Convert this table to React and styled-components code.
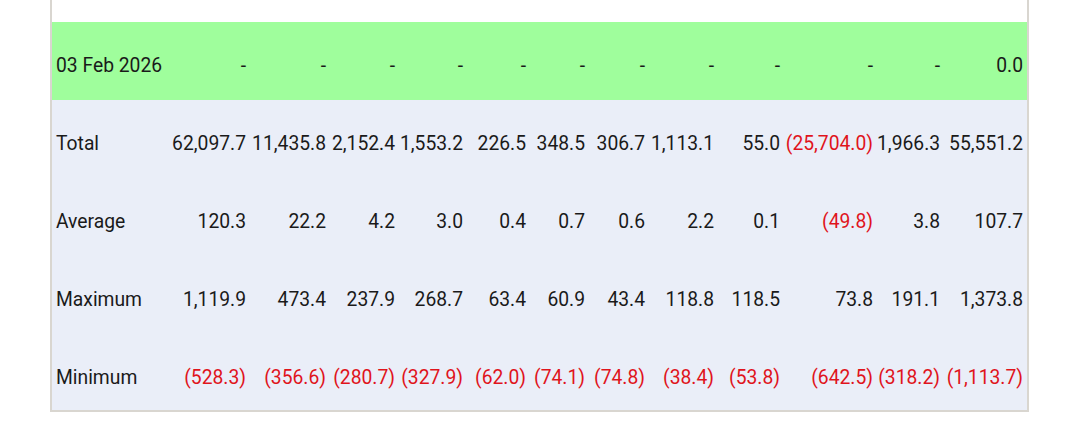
import React from 'react';
import styled, { createGlobalStyle } from 'styled-components';

const GlobalStyle = createGlobalStyle`
  body {
    margin: 0;
    background: #fff;
    font-family: Roboto, "Noto Sans", Arial, sans-serif;
  }
`;

// column widths measured off the screen
const COLS = [115, 83, 80, 69, 68, 63, 59, 60, 69, 66, 93, 67, 83];

const TableBox = styled.div`
  margin-left: 50px;
  width: 975px;
  border: 2px solid #d9d6d0;
  border-top: none;
`;

const TopGap = styled.div`
  height: 22px;
  background: #fff;
`;

const Row = styled.div`
  display: grid;
  grid-template-columns: ${COLS.map((c) => `${c}px`).join(' ')};
  height: ${(p) => (p.$last ? 76 : 78)}px;
  padding-top: 33px;
  box-sizing: border-box;
  background: ${(p) => (p.$highlight ? '#9ffe9c' : '#eaeef8')};
  font-size: 19.3px;
  line-height: 22px;
  color: #1a1a1a;
`;

const Label = styled.div`
  padding-left: 4px;
  white-space: nowrap;
`;

const Cell = styled.div`
  text-align: right;
  padding-right: 4px;
  white-space: nowrap;
  color: ${(p) => (p.$neg ? '#e0141c' : '#1a1a1a')};
`;

const rows = [
  {
    label: '03 Feb 2026',
    highlight: true,
    values: ['-', '-', '-', '-', '-', '-', '-', '-', '-', '-', '-', '0.0'],
  },
  {
    label: 'Total',
    values: ['62,097.7', '11,435.8', '2,152.4', '1,553.2', '226.5', '348.5', '306.7', '1,113.1', '55.0', '(25,704.0)', '1,966.3', '55,551.2'],
  },
  {
    label: 'Average',
    values: ['120.3', '22.2', '4.2', '3.0', '0.4', '0.7', '0.6', '2.2', '0.1', '(49.8)', '3.8', '107.7'],
  },
  {
    label: 'Maximum',
    values: ['1,119.9', '473.4', '237.9', '268.7', '63.4', '60.9', '43.4', '118.8', '118.5', '73.8', '191.1', '1,373.8'],
  },
  {
    label: 'Minimum',
    values: ['(528.3)', '(356.6)', '(280.7)', '(327.9)', '(62.0)', '(74.1)', '(74.8)', '(38.4)', '(53.8)', '(642.5)', '(318.2)', '(1,113.7)'],
  },
];

const App = () => {
  return (
    <>
      <GlobalStyle />
      <TableBox>
        <TopGap />
        {rows.map((row, i) => (
          <Row key={row.label} $highlight={row.highlight} $last={i === rows.length - 1}>
            <Label>{row.label}</Label>
            {row.values.map((v, j) => (
              <Cell key={j} $neg={v.startsWith('(')}>{v}</Cell>
            ))}
          </Row>
        ))}
      </TableBox>
    </>
  );
};

export default App;
